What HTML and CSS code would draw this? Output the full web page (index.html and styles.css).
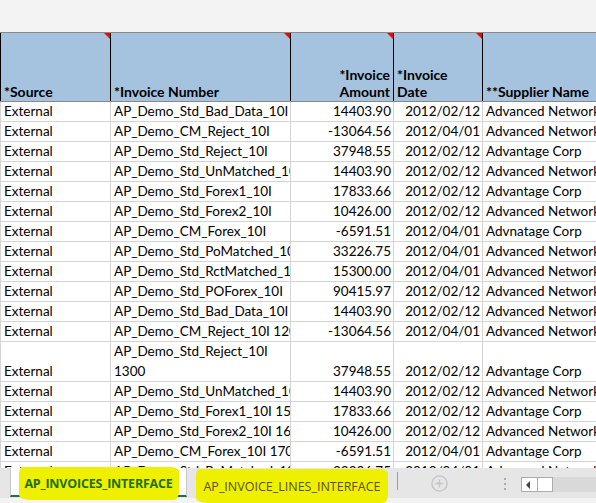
FILE: index.html
```html
<!DOCTYPE html>
<html lang="en">
<head>
  <meta charset="UTF-8" />
  <title>AP_INVOICES_INTERFACE</title>
  <link rel="stylesheet" href="styles.css">
</head>
<body>

  <!-- franja superior -->
  <div class="top"></div>

  <!-- hoja -->
  <div class="sheet">
    <div class="row head">
      <div class="h note">*Source</div>
      <div class="h note">*Invoice Number</div>
      <div class="h note right">*Invoice<br>Amount</div>
      <div class="h note">*Invoice<br>Date</div>
      <div class="h">**Supplier Name</div>
    </div>

    <div class="row"><div class="c">External</div><div class="c">AP_Demo_Std_Bad_Data_10I</div><div class="c num">14403.90</div><div class="c num">2012/02/12</div><div class="c">Advanced Network Devices</div></div>
    <div class="row"><div class="c">External</div><div class="c">AP_Demo_CM_Reject_10I</div><div class="c num">-13064.56</div><div class="c num">2012/04/01</div><div class="c">Advanced Network Devices</div></div>
    <div class="row"><div class="c">External</div><div class="c">AP_Demo_Std_Reject_10I</div><div class="c num">37948.55</div><div class="c num">2012/02/12</div><div class="c">Advantage Corp</div></div>
    <div class="row"><div class="c">External</div><div class="c">AP_Demo_Std_UnMatched_10I</div><div class="c num">14403.90</div><div class="c num">2012/02/12</div><div class="c">Advanced Network Devices</div></div>
    <div class="row"><div class="c">External</div><div class="c">AP_Demo_Std_Forex1_10I</div><div class="c num">17833.66</div><div class="c num">2012/02/12</div><div class="c">Advantage Corp</div></div>
    <div class="row"><div class="c">External</div><div class="c">AP_Demo_Std_Forex2_10I</div><div class="c num">10426.00</div><div class="c num">2012/02/12</div><div class="c">Advanced Network Devices</div></div>
    <div class="row"><div class="c">External</div><div class="c">AP_Demo_CM_Forex_10I</div><div class="c num">-6591.51</div><div class="c num">2012/04/01</div><div class="c">Advnatage Corp</div></div>
    <div class="row"><div class="c">External</div><div class="c">AP_Demo_Std_PoMatched_10I</div><div class="c num">33226.75</div><div class="c num">2012/04/01</div><div class="c">Advanced Network Devices</div></div>
    <div class="row"><div class="c">External</div><div class="c">AP_Demo_Std_RctMatched_10I</div><div class="c num">15300.00</div><div class="c num">2012/04/01</div><div class="c">Advanced Network Devices</div></div>
    <div class="row"><div class="c">External</div><div class="c">AP_Demo_Std_POForex_10I</div><div class="c num">90415.97</div><div class="c num">2012/02/12</div><div class="c">Advanced Network Devices</div></div>
    <div class="row"><div class="c">External</div><div class="c">AP_Demo_Std_Bad_Data_10I</div><div class="c num">14403.90</div><div class="c num">2012/02/12</div><div class="c">Advanced Network Devices</div></div>
    <div class="row"><div class="c">External</div><div class="c">AP_Demo_CM_Reject_10I 1200</div><div class="c num">-13064.56</div><div class="c num">2012/04/01</div><div class="c">Advanced Network Devices</div></div>
    <div class="row tall"><div class="c">External</div><div class="c wrap">AP_Demo_Std_Reject_10I 1300</div><div class="c num">37948.55</div><div class="c num">2012/02/12</div><div class="c">Advantage Corp</div></div>
    <div class="row"><div class="c">External</div><div class="c">AP_Demo_Std_UnMatched_10I 1400</div><div class="c num">14403.90</div><div class="c num">2012/02/12</div><div class="c">Advanced Network Devices</div></div>
    <div class="row"><div class="c">External</div><div class="c">AP_Demo_Std_Forex1_10I 1500</div><div class="c num">17833.66</div><div class="c num">2012/02/12</div><div class="c">Advantage Corp</div></div>
    <div class="row"><div class="c">External</div><div class="c">AP_Demo_Std_Forex2_10I 1600</div><div class="c num">10426.00</div><div class="c num">2012/02/12</div><div class="c">Advanced Network Devices</div></div>
    <div class="row"><div class="c">External</div><div class="c">AP_Demo_CM_Forex_10I 1700</div><div class="c num">-6591.51</div><div class="c num">2012/04/01</div><div class="c">Advantage Corp</div></div>
    <div class="row"><div class="c">External</div><div class="c">AP_Demo_Std_PoMatched_10I 1800</div><div class="c num">33226.75</div><div class="c num">2012/04/01</div><div class="c">Advanced Network Devices</div></div>
  </div>

  <!-- pestañas -->
  <div class="tabs">
    <div class="tab active"><span class="mark mark-a">AP_INVOICES_INTERFACE</span></div>
    <div class="tab"><span class="mark mark-b">AP_INVOICE_LINES_INTERFACE</span></div>
    <div class="sep"></div>
    <div class="add" aria-label="New sheet">
      <svg width="17" height="17" viewBox="0 0 17 17"><circle cx="8.5" cy="8.5" r="7.6" fill="none" stroke="#c4c4c4" stroke-width="1.4"/><path d="M8.5 4.5v8M4.5 8.5h8" stroke="#c4c4c4" stroke-width="1.4"/></svg>
    </div>
    <div class="dots"><i></i><i></i><i></i></div>
    <div class="scroll">
      <div class="arrow-box"><span class="tri"></span></div>
      <div class="thumb"></div>
      <div class="track"></div>
    </div>
  </div>
  <div class="foot"></div>

</body>
</html>
```

FILE: styles.css
```css
body {
  margin: 0;
  width: 596px;
  height: 503px;
  overflow: hidden;
  background: #fff;
  font-family: Lato, "Open Sans", sans-serif;
  color: #000;
}

.top {
  height: 32px;
  background: #f3f3f3;
}

.sheet {
  height: 436px;
  overflow: hidden;
}

.row {
  display: grid;
  grid-template-columns: 111px 180px 103px 89px 240px;
}

/* cabecera */
.head {
  height: 70px;
  box-sizing: border-box;
  background: #a5c2de;
  border-top: 1px solid #8a8a8a;
  border-bottom: 1px solid #8a8a8a;
}

.h {
  position: relative;
  display: flex;
  flex-direction: column;
  justify-content: flex-end;
  padding: 0 3px 1px 3px;
  border-right: 1px solid #000;
  font-weight: bold;
  font-size: 14px;
  line-height: 17px;
  white-space: nowrap;
}
.h:first-child {
  border-left: 1px solid #000;
}
.h.right {
  text-align: right;
}

/* indicador de comentario */
.note::after {
  content: "";
  position: absolute;
  top: 0;
  right: 0;
  border-top: 6px solid #f00;
  border-left: 6px solid transparent;
}

/* celdas */
.c {
  height: 20px;
  box-sizing: border-box;
  padding: 0 0 0 3px;
  border-right: 1px solid #d4d4d4;
  border-bottom: 1px solid #d4d4d4;
  font-size: 13.5px;
  line-height: 19px;
  white-space: nowrap;
  overflow: hidden;
}
.c:first-child {
  border-left: 1px solid #d4d4d4;
}
.c.num {
  text-align: right;
  padding: 0 2px 0 0;
}

.tall .c {
  height: 40px;
  display: flex;
  flex-direction: column;
  justify-content: flex-end;
}
.tall .c.num {
  align-items: flex-end;
}
.c.wrap {
  white-space: normal;
  line-height: 20px;
}

/* barra de hojas */
.tabs {
  height: 30px;
  background: #e6e6e6;
  display: flex;
  align-items: flex-start;
}

.tab {
  height: 30px;
  display: flex;
  justify-content: center;
  align-items: flex-start;
  font-family: "Open Sans", sans-serif;
  font-size: 12.5px;
}
.tab.active {
  margin-left: 10px;
  width: 177px;
  height: 29px;
  box-sizing: border-box;
  background: #fff;
  border-left: 1px solid #c8c8c8;
  border-right: 1px solid #c8c8c8;
  border-bottom: 2px solid #1e7145;
}
.tab:not(.active) {
  width: 210px;
}

.mark {
  display: inline-flex;
  align-items: center;
  height: 33px;
  margin-top: -1px;
  padding: 0 3px;
  background: #efef00;
  border-radius: 4px 9px 5px 11px / 7px 4px 9px 5px;
  white-space: nowrap;
}
.mark-a {
  width: 160px;
  box-sizing: border-box;
  justify-content: center;
  font-weight: bold;
  letter-spacing: -0.2px;
  color: #206f0c;
}
.mark-b {
  width: 192px;
  box-sizing: border-box;
  justify-content: center;
  margin-top: 1px;
  height: 34px;
  color: #5a5200;
}

.sep {
  width: 1px;
  height: 18px;
  margin-top: 4px;
  background: #9e9e9e;
}

.add {
  margin-left: 33px;
  margin-top: 7px;
  width: 17px;
  height: 17px;
}
.add svg {
  display: block;
}

.dots {
  margin-left: 56px;
  margin-top: 10px;
  display: flex;
  flex-direction: column;
  gap: 3px;
}
.dots i {
  display: block;
  width: 2px;
  height: 2px;
  background: #ababab;
}

.scroll {
  margin-left: 15px;
  margin-top: 9px;
  display: flex;
  flex: 1;
  height: 15px;
}
.arrow-box,
.thumb {
  box-sizing: border-box;
  height: 15px;
  background: #fff;
  border: 1px solid #ababab;
}
.arrow-box {
  width: 17px;
  display: flex;
  align-items: center;
  padding-left: 4px;
}
.tri {
  border-right: 4px solid #444;
  border-top: 4px solid transparent;
  border-bottom: 4px solid transparent;
}
.thumb {
  width: 15px;
  border-left: none;
}
.track {
  flex: 1;
  background: #d9d9d9;
}

.foot {
  height: 5px;
  background: #f3f3f3;
}
```
